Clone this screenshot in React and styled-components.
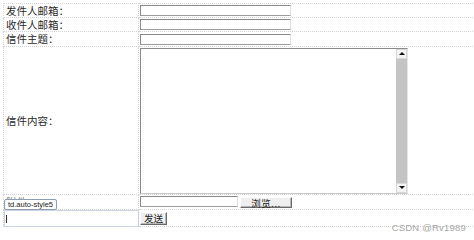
import React from "react";
import styled, { createGlobalStyle } from "styled-components";

const Global = createGlobalStyle`
  html, body { margin: 0; padding: 0; background: #fff; }
  body { font-family: "Noto Sans CJK SC", "DejaVu Sans", sans-serif; }
`;

const Page = styled.div`
  position: relative;
  width: 474px;
  height: 240px;
  padding: 3px 0 0 3px;
  box-sizing: border-box;
  overflow: hidden;
`;

const Table = styled.table`
  border-collapse: collapse;
  width: 480px;
  table-layout: fixed;
`;

const Row = styled.tr`
  height: ${(p) => p.$h}px;
`;

const LabelCell = styled.td`
  position: relative;
  width: 135px;
  padding: 0 0 0 2px;
  border: 1px dotted #d4d4d4;
  font-size: 10.5px;
  line-height: 12px;
  color: #2a2a2a;
  vertical-align: ${(p) => p.$align || "middle"};
  white-space: nowrap;
  box-sizing: border-box;
  ${(p) => p.$selected && `outline: 1px solid #c9d3e2; outline-offset: -1px;`}
`;

const FieldCell = styled.td`
  padding: 0 0 0 1px;
  border: 1px dotted #d4d4d4;
  vertical-align: ${(p) => p.$align || "middle"};
  box-sizing: border-box;
`;

const TextBox = styled.div`
  width: ${(p) => p.$w}px;
  height: 11px;
  box-sizing: border-box;
  border-top: 1px solid #8a8a8a;
  border-left: 1px solid #8a8a8a;
  border-bottom: 1px solid #9c9c9c;
  border-right: 1px solid #e0e0e0;
  background: #fff;
`;

const AreaBox = styled.div`
  display: flex;
  width: 268px;
  height: 146px;
  box-sizing: border-box;
  border-top: 1px solid #8a8a8a;
  border-left: 1px solid #8a8a8a;
  border-bottom: 1px solid #c8c8c8;
  border-right: 1px solid #e6e6e6;
`;

const AreaContent = styled.div`
  flex: 1;
  background: #fff;
`;

const ScrollBar = styled.div`
  width: 11px;
  display: flex;
  flex-direction: column;
`;

const ScrollButton = styled.div`
  height: 10px;
  background: #f4f4f4;
  border: 1px solid #d8d8d8;
  box-sizing: border-box;
  display: flex;
  align-items: center;
  justify-content: center;
`;

const Arrow = styled.span`
  width: 0;
  height: 0;
  border-left: 3px solid transparent;
  border-right: 3px solid transparent;
  ${(p) =>
    p.$dir === "up"
      ? "border-bottom: 3px solid #111;"
      : "border-top: 3px solid #111;"}
`;

const Track = styled.div`
  flex: 1;
  background: #c4c4c4;
`;

const FileRow = styled.div`
  display: flex;
  align-items: flex-start;
  gap: 2px;
`;

const Button = styled.div`
  display: flex;
  align-items: center;
  justify-content: center;
  width: ${(p) => p.$w}px;
  height: ${(p) => p.$h}px;
  margin-top: ${(p) => p.$mt || 0}px;
  box-sizing: border-box;
  background: #efefef;
  border-top: 1px solid #ffffff;
  border-left: 1px solid #ffffff;
  border-right: 1px solid #6a6a6a;
  border-bottom: 1px solid #6a6a6a;
  box-shadow: inset -1px -1px 0 #b8b8b8;
  font-size: 9.5px;
  line-height: 10px;
  color: #222;
  letter-spacing: ${(p) => p.$ls || 0}px;
  white-space: nowrap;
`;

const Tip = styled.div`
  position: absolute;
  left: 0;
  top: -11px;
  height: 9px;
  padding: 0 3px;
  background: #fff;
  border: 1px solid #8e9cb4;
  border-radius: 2px;
  font-family: "Liberation Sans", "DejaVu Sans", sans-serif;
  font-size: 7.5px;
  line-height: 9px;
  color: #222;
  white-space: nowrap;
`;

const Caret = styled.span`
  display: inline-block;
  width: 1px;
  height: 8px;
  background: #333;
  vertical-align: middle;
`;

const Watermark = styled.div`
  position: absolute;
  right: 8px;
  bottom: 7px;
  font-family: "Liberation Sans", "DejaVu Sans", sans-serif;
  font-size: 9.5px;
  color: #a6a6a6;
  letter-spacing: 0.2px;
`;

const ClippedLabel = styled.div`
  height: 4px;
  overflow: hidden;
  color: #888;
  line-height: 12px;
  margin-top: 1px;
`;

export default function App() {
  return (
    <>
      <Global />
      <Page>
        <Table>
          <colgroup>
            <col style={{ width: 135 }} />
            <col />
          </colgroup>
          <tbody>
            <Row $h={14}>
              <LabelCell>发件人邮箱：</LabelCell>
              <FieldCell>
                <TextBox $w={151} />
              </FieldCell>
            </Row>
            <Row $h={14}>
              <LabelCell>收件人邮箱：</LabelCell>
              <FieldCell>
                <TextBox $w={151} />
              </FieldCell>
            </Row>
            <Row $h={15}>
              <LabelCell>信件主题：</LabelCell>
              <FieldCell>
                <TextBox $w={151} />
              </FieldCell>
            </Row>
            <Row $h={148}>
              <LabelCell>信件内容：</LabelCell>
              <FieldCell>
                <AreaBox>
                  <AreaContent />
                  <ScrollBar>
                    <ScrollButton>
                      <Arrow $dir="up" />
                    </ScrollButton>
                    <Track />
                    <ScrollButton>
                      <Arrow $dir="down" />
                    </ScrollButton>
                  </ScrollBar>
                </AreaBox>
              </FieldCell>
            </Row>
            <Row $h={15}>
              <LabelCell $align="top">
                <ClippedLabel>附件：</ClippedLabel>
              </LabelCell>
              <FieldCell>
                <FileRow>
                  <TextBox $w={98} />
                  <Button $w={52} $h={11} $mt={1} $ls={0.5}>
                    浏览...
                  </Button>
                </FileRow>
              </FieldCell>
            </Row>
            <Row $h={17}>
              <LabelCell $selected>
                <Tip>td.auto-style5</Tip>
                <Caret />
              </LabelCell>
              <FieldCell>
                <Button $w={27} $h={13}>
                  发送
                </Button>
              </FieldCell>
            </Row>
          </tbody>
        </Table>
        <Watermark>CSDN @Rv1989</Watermark>
      </Page>
    </>
  );
}
